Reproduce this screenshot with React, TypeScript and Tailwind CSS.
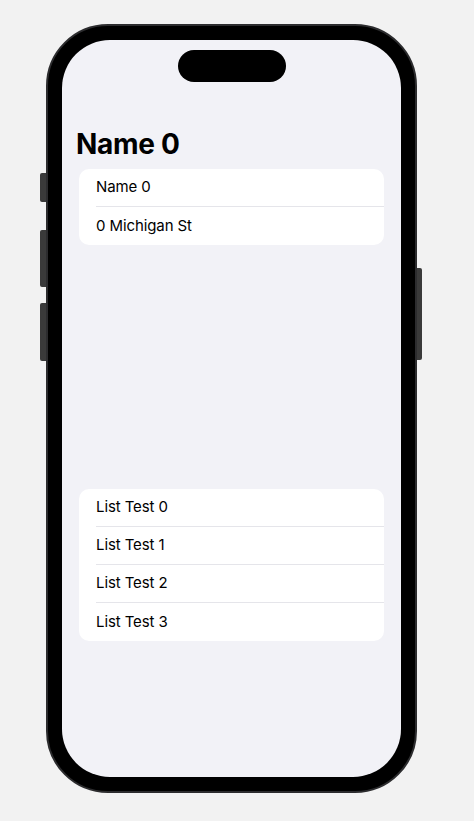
import React from 'react';

const Row: React.FC<{ label: string; last?: boolean }> = ({ label, last }) => (
  <div className="pl-[17px] h-[38px] flex">
    <div className={`flex-1 flex items-center text-[15px] tracking-[-0.1px] text-black ${last ? '' : 'border-b border-[#e5e5ea]'}`}>
      {label}
    </div>
  </div>
);

const App: React.FC = () => {
  const list = [0, 1, 2, 3].map(i => `List Test ${i}`);

  return (
    <div className="w-[474px] h-[821px] bg-[#f2f2f2] pt-[24px] pl-[46px]" style={{ fontFamily: 'Inter, "Noto Sans", sans-serif' }}>
      <div className="relative w-[371px] h-[769px]">
        {/* side buttons */}
        <div className="absolute left-[-6px] top-[149px] w-[6px] h-[29px] bg-[#3a3a3a] rounded-l-[2px]"></div>
        <div className="absolute left-[-6px] top-[206px] w-[6px] h-[57px] bg-[#3a3a3a] rounded-l-[2px]"></div>
        <div className="absolute left-[-6px] top-[279px] w-[6px] h-[58px] bg-[#3a3a3a] rounded-l-[2px]"></div>
        <div className="absolute right-[-5px] top-[244px] w-[5px] h-[92px] bg-[#3a3a3a] rounded-r-[2px]"></div>

        <div className="w-full h-full rounded-[62px] bg-black border-2 border-[#2c2c2e] p-[14px]">
          <div className="w-full h-full rounded-[48px] bg-[#f2f2f7] overflow-hidden flex flex-col">
            <div className="flex justify-center pt-[10px]">
              <div className="w-[108px] h-[32px] rounded-full bg-black"></div>
            </div>

            <div className="pl-[14px] mt-[45px] text-[28px] leading-[34px] font-bold text-black tracking-[-0.3px]">Name 0</div>

            <div className="mt-[8px] ml-[17px] mr-[17px] bg-white rounded-[10px] overflow-hidden">
              <Row label="Name 0" />
              <Row label="0 Michigan St" last />
            </div>

            <div className="mt-[244px] ml-[17px] mr-[17px] bg-white rounded-[10px] overflow-hidden">
              {list.map((l, i) => (
                <Row key={l} label={l} last={i === list.length - 1} />
              ))}
            </div>
          </div>
        </div>
      </div>
    </div>
  );
};

export default App;
